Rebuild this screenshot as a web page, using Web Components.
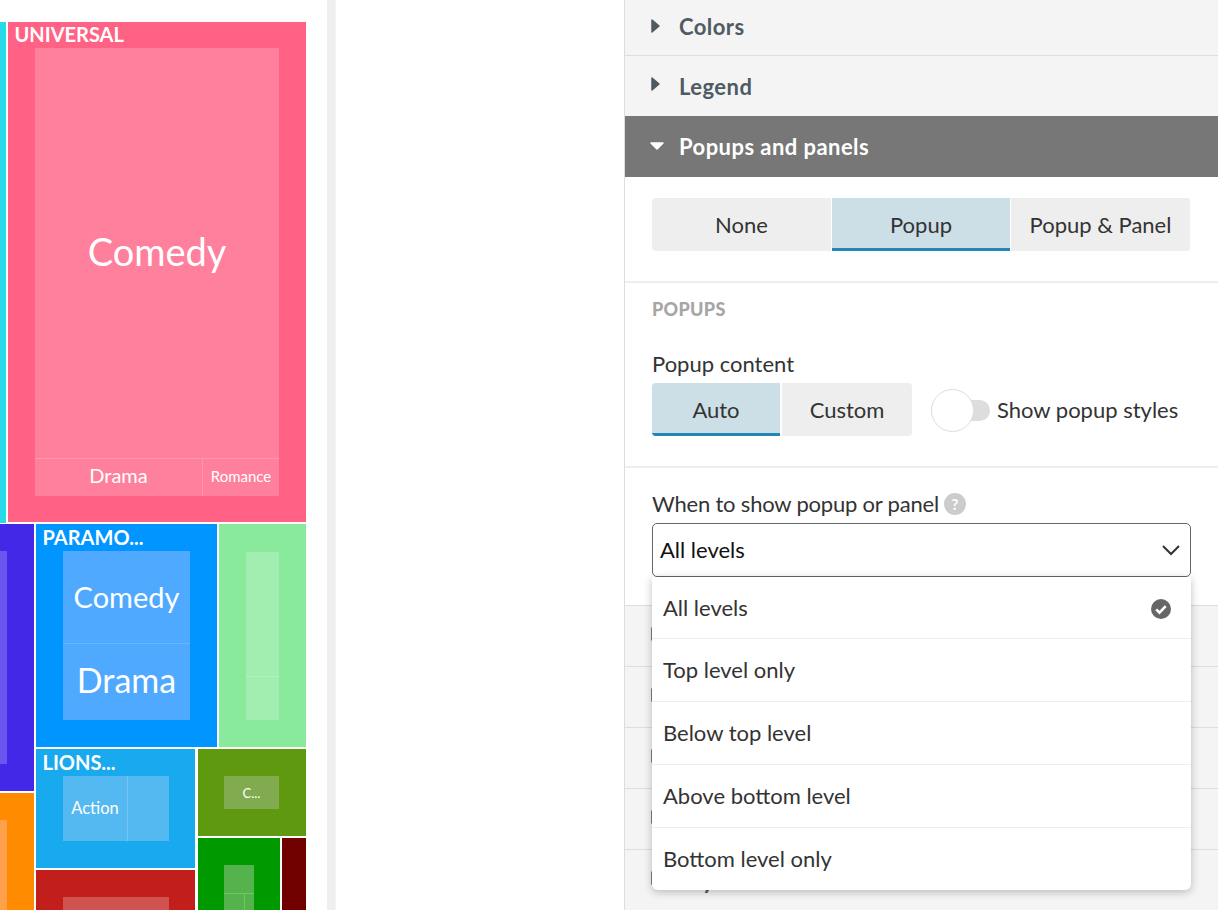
<!DOCTYPE html>
<html>
<head>
<meta charset="utf-8">
<title>Popups and panels</title>
<style>
  html, body { margin: 0; height: 910px; overflow: hidden; background: #fff; }
  body { display: flex; font-family: "Lato", "Liberation Sans", sans-serif; color: #333; }
</style>
</head>
<body>
<preview-pane>
  <tree-tile x="0" y="22" w="6" h="501" color="#29dae8"></tree-tile>
  <tree-tile x="8" y="22" w="298" h="500" color="#ff6285" title-text="UNIVERSAL">
    <tree-tile x="27" y="26" w="244" h="410" color="#ff809d" label="Comedy" size="38" lift="2"></tree-tile>
    <tree-tile x="27" y="436" w="244" h="1" color="#ff97ae"></tree-tile>
    <tree-tile x="27" y="437" w="167" h="37" color="#ff809d" label="Drama" size="20" lift="3"></tree-tile>
    <tree-tile x="194" y="437" w="1" h="37" color="#ff97ae"></tree-tile>
    <tree-tile x="195" y="437" w="76" h="37" color="#ff809d" label="Romance" size="15" lift="2"></tree-tile>
  </tree-tile>
  <tree-tile x="0" y="524" w="34" h="267" color="#4428e8">
    <tree-tile x="-20" y="27" w="27" h="213" color="#6a55ef"></tree-tile>
  </tree-tile>
  <tree-tile x="0" y="793" w="34" h="117" color="#ff8c00">
    <tree-tile x="-20" y="27" w="27" h="90" color="#ffa04d"></tree-tile>
  </tree-tile>
  <tree-tile x="36" y="524" w="181" h="223" color="#0095ff" title-text="PARAMO..." title-top="1">
    <tree-tile x="27" y="27" w="127" h="92" color="#4fa9ff" label="Comedy" size="29" lift="1"></tree-tile>
    <tree-tile x="27" y="119" w="127" h="1" color="#69b5ff"></tree-tile>
    <tree-tile x="27" y="120" w="127" h="76" color="#4fa9ff" label="Drama" size="34" lift="3"></tree-tile>
  </tree-tile>
  <tree-tile x="219" y="524" w="87" h="223" color="#8aea9b">
    <tree-tile x="27" y="28" w="33" h="124" color="#a1eeb0"></tree-tile>
    <tree-tile x="27" y="152" w="33" h="1" color="#b2f1c0"></tree-tile>
    <tree-tile x="27" y="153" w="33" h="43" color="#a1eeb0"></tree-tile>
  </tree-tile>
  <tree-tile x="36" y="749" w="159" h="119" color="#19a9ee" title-text="LIONS..." title-top="1">
    <tree-tile x="27" y="27" w="64" h="65" color="#55b9f1" label="Action" size="16.5" lift="1"></tree-tile>
    <tree-tile x="91" y="27" w="1" h="65" color="#74c6f4"></tree-tile>
    <tree-tile x="92" y="27" w="41" h="65" color="#55b9f1"></tree-tile>
  </tree-tile>
  <tree-tile x="198" y="749" w="108" h="87" color="#5e990f">
    <tree-tile x="26" y="27" w="55" h="33" color="#80ac4f" label="C..." size="13"></tree-tile>
  </tree-tile>
  <tree-tile x="198" y="838" w="82" h="72" color="#009a00">
    <tree-tile x="26" y="27" w="30" h="28" color="#54b34c"></tree-tile>
    <tree-tile x="26" y="55" w="30" h="1" color="#73c26c"></tree-tile>
    <tree-tile x="26" y="56" w="20" h="16" color="#54b34c"></tree-tile>
    <tree-tile x="46" y="56" w="1" h="16" color="#73c26c"></tree-tile>
    <tree-tile x="47" y="56" w="9" h="16" color="#54b34c"></tree-tile>
  </tree-tile>
  <tree-tile x="282" y="838" w="24" h="72" color="#700000"></tree-tile>
  <tree-tile x="36" y="870" w="159" h="40" color="#c21f1c">
    <tree-tile x="27" y="27" w="106" h="13" color="#d15350"></tree-tile>
  </tree-tile>
</preview-pane>

<settings-panel>
  <section-head height="55" divider lift="1">Colors</section-head>
  <section-head height="60">Legend</section-head>
  <section-head height="61" open>Popups and panels</section-head>

  <panel-group pad="21px 27px 30px">
    <seg-buttons options="None|Popup|Popup &amp; Panel" selected="1" cols="179px 178px 179px" gap="1"></seg-buttons>
  </panel-group>

  <panel-group pad="15px 27px 30px">
    <group-title>POPUPS</group-title>
    <div style="display:flex;flex-direction:column;margin-top:30px">
      <field-label>Popup content</field-label>
      <div style="display:flex;align-items:center;margin-top:5px">
        <seg-buttons options="Auto|Custom" selected="0" cols="128px 130px" gap="2"></seg-buttons>
        <toggle-switch>Show popup styles</toggle-switch>
      </div>
    </div>
  </panel-group>

  <panel-group pad="22px 27px 28px" last>
    <field-label help>When to show popup or panel</field-label>
    <drop-select value="All levels" options="All levels|Top level only|Below top level|Above bottom level|Bottom level only"></drop-select>
  </panel-group>

  <section-head height="60" topline></section-head>
  <section-head height="60" topline></section-head>
  <section-head height="60" topline></section-head>
  <section-head height="60" topline></section-head>
  <section-head height="60" topline>Layout</section-head>
</settings-panel>

<script>
class PreviewPane extends HTMLElement {
  constructor() {
    super();
    this.attachShadow({ mode: 'open' });
    this.shadowRoot.innerHTML = `
      <style>
        :host { display: flex; flex: none; width: 336px; height: 910px; }
        .map { position: relative; width: 327px; height: 910px; overflow: hidden; background: #fff; }
        .gutter { width: 8px; background: #efefef; border-right: 1px solid #f4f4f4; }
      </style>
      <div class="map"><slot></slot></div>
      <div class="gutter"></div>`;
  }
}

class TreeTile extends HTMLElement {
  constructor() {
    super();
    const a = n => this.getAttribute(n);
    this.attachShadow({ mode: 'open' });
    const size = a('size') || 16;
    const lift = +(a('lift') || 0);
    this.shadowRoot.innerHTML = `
      <style>
        :host {
          position: absolute; display: block; overflow: hidden;
          left: ${a('x')}px; top: ${a('y')}px; width: ${a('w')}px; height: ${a('h')}px;
          background: ${a('color')}; color: #fff;
          font-family: "Lato", sans-serif;
        }
        .title { position: absolute; left: 6.5px; top: ${a('title-top') || 0}px; font-size: 20px; font-weight: 700; line-height: 24px; white-space: nowrap; }
        .label {
          box-sizing: border-box; height: 100%; padding-bottom: ${lift * 2}px;
          display: flex; align-items: center; justify-content: center;
          font-size: ${size}px; white-space: nowrap;
        }
      </style>
      ${a('title-text') ? `<div class="title">${a('title-text')}</div>` : ''}
      ${a('label') ? `<div class="label">${a('label')}</div>` : ''}
      <slot></slot>`;
  }
}

class SettingsPanel extends HTMLElement {
  constructor() {
    super();
    this.attachShadow({ mode: 'open' });
    this.shadowRoot.innerHTML = `
      <style>
        :host {
          display: block; flex: none; width: 593px; height: 910px; margin-left: 288px;
          border-left: 1px solid #ddd; background: #fff; color: #333;
          font-family: "Lato", sans-serif;
        }
      </style>
      <slot></slot>`;
  }
}

class SectionHead extends HTMLElement {
  constructor() {
    super();
    const open = this.hasAttribute('open');
    this.attachShadow({ mode: 'open' });
    this.shadowRoot.innerHTML = `
      <style>
        :host {
          display: flex; align-items: center; box-sizing: content-box;
          height: ${this.getAttribute('height')}px; padding-left: 54px; position: relative;
          background: ${open ? '#777' : '#f4f4f4'};
          color: ${open ? '#fff' : '#4f5b63'};
          font-size: 22px; font-weight: 700; letter-spacing: .45px;
          ${this.hasAttribute('divider') ? 'border-bottom: 1px solid #ddd;' : ''}
          ${this.hasAttribute('topline') ? 'border-top: 1px solid #ddd;' : ''}
        }
        .txt { margin-bottom: ${(this.getAttribute('lift') || 0) * 2}px; }
        svg { position: absolute; left: ${open ? 25 : 26}px; top: 50%; margin-top: ${open ? -5 : -9}px; }
      </style>
      ${open
        ? '<svg width="14" height="8" viewBox="0 0 14 8"><path d="M1 1h12L7 7z" fill="#fff" stroke="#fff" stroke-width="1.5" stroke-linejoin="round"/></svg>'
        : '<svg width="10" height="14" viewBox="0 0 10 14"><path d="M1 1v12l7-6z" fill="#4f5b63" stroke="#4f5b63" stroke-width="1.5" stroke-linejoin="round"/></svg>'}
      <span class="txt"><slot></slot></span>`;
  }
}

class PanelGroup extends HTMLElement {
  constructor() {
    super();
    this.attachShadow({ mode: 'open' });
    this.shadowRoot.innerHTML = `
      <style>
        :host {
          display: block; padding: ${this.getAttribute('pad')};
          ${this.hasAttribute('last') ? '' : 'border-bottom: 2px solid #eee;'}
        }
      </style>
      <slot></slot>`;
  }
}

class GroupTitle extends HTMLElement {
  constructor() {
    super();
    this.attachShadow({ mode: 'open' });
    this.shadowRoot.innerHTML = `
      <style>:host { display: block; font-size: 18px; line-height: 22px; font-weight: 900; letter-spacing: .3px; color: #a6a6a6; }</style>
      <slot></slot>`;
  }
}

class FieldLabel extends HTMLElement {
  constructor() {
    super();
    const help = this.hasAttribute('help');
    this.attachShadow({ mode: 'open' });
    this.shadowRoot.innerHTML = `
      <style>
        :host {
          display: flex; align-items: center; gap: 5px; font-size: 22px; line-height: 28px; color: #333;
          letter-spacing: ${help ? '-.2px' : '0'};
        }
        .help {
          width: 22px; height: 22px; border-radius: 50%; background: #ccc; color: #fff;
          display: flex; align-items: center; justify-content: center;
          font-size: 15px; font-weight: 700;
        }
      </style>
      <slot></slot>
      ${help ? '<span class="help">?</span>' : ''}`;
  }
}

class SegButtons extends HTMLElement {
  constructor() {
    super();
    this.attachShadow({ mode: 'open' });
    const sel = +this.getAttribute('selected');
    const items = this.getAttribute('options').split('|').map((t, i) =>
      `<div class="btn${i === sel ? ' on' : ''}">${t.replace('&', '&amp;')}</div>`).join('');
    this.shadowRoot.innerHTML = `
      <style>
        :host {
          display: grid; flex: none; height: 53px;
          grid-template-columns: ${this.getAttribute('cols')};
          gap: ${this.getAttribute('gap')}px; border-radius: 4px; overflow: hidden;
        }
        .btn {
          display: flex; align-items: center; justify-content: center;
          background: #eee; color: #333; font-size: 22px; box-sizing: border-box; white-space: nowrap;
        }
        .on { background: #ccdee6; border-bottom: 3px solid #2386b5; padding-top: 3px; }
      </style>
      ${items}`;
  }
}

class ToggleSwitch extends HTMLElement {
  constructor() {
    super();
    this.attachShadow({ mode: 'open' });
    this.shadowRoot.innerHTML = `
      <style>
        :host { display: flex; align-items: center; margin-left: 19px; font-size: 22px; color: #333; white-space: nowrap; }
        .track { position: relative; top: 1px; width: 59px; height: 21px; margin-right: 7px; border-radius: 11px; background: #ddd; }
        .knob {
          position: absolute; left: 0; top: -11px; width: 43px; height: 43px; box-sizing: border-box;
          border-radius: 50%; background: #fff; border: 1px solid #ddd;
        }
      </style>
      <div class="track"><div class="knob"></div></div>
      <slot></slot>`;
  }
}

class DropSelect extends HTMLElement {
  constructor() {
    super();
    this.attachShadow({ mode: 'open' });
    const value = this.getAttribute('value');
    const rows = this.getAttribute('options').split('|').map(t => `
      <div class="row"><span>${t}</span>${t === value ? `
        <svg width="20" height="20" viewBox="0 0 20 20"><circle cx="10" cy="10" r="10" fill="#666"/><path d="M5.2 10.3l3.3 3.3 6.2-6.4" fill="none" stroke="#fff" stroke-width="2.6"/></svg>` : ''}
      </div>`).join('');
    this.shadowRoot.innerHTML = `
      <style>
        :host { display: block; position: relative; margin-top: 5px; }
        .box {
          display: flex; align-items: center; justify-content: space-between; box-sizing: border-box;
          height: 54px; padding: 0 10px 2px 7px; border: 1px solid #666; border-radius: 5px;
          background: #fff; color: #111; font-size: 22px;
        }
        .box svg { position: relative; top: 1px; }
        .menu {
          position: absolute; z-index: 5; left: 0; right: 0; top: 54px; background: #fff;
          border-radius: 0 0 6px 6px; box-shadow: 0 2px 8px rgba(0,0,0,.25);
        }
        .row {
          display: flex; align-items: center; justify-content: space-between; box-sizing: border-box;
          height: 63px; padding: 0 20px 2px 11px; font-size: 22px; color: #333; border-bottom: 1px solid #eee;
        }
        .row:first-child { height: 62px; padding-bottom: 0; }
        .row svg { position: relative; top: 1px; }
        .row:last-child { height: 62px; border-bottom: 0; }
      </style>
      <div class="box"><span>${value}</span>
        <svg width="18" height="11" viewBox="0 0 18 11"><path d="M1 1l8 8 8-8" fill="none" stroke="#333" stroke-width="2"/></svg>
      </div>
      <div class="menu">${rows}</div>`;
  }
}

customElements.define('preview-pane', PreviewPane);
customElements.define('tree-tile', TreeTile);
customElements.define('settings-panel', SettingsPanel);
customElements.define('section-head', SectionHead);
customElements.define('panel-group', PanelGroup);
customElements.define('group-title', GroupTitle);
customElements.define('field-label', FieldLabel);
customElements.define('seg-buttons', SegButtons);
customElements.define('toggle-switch', ToggleSwitch);
customElements.define('drop-select', DropSelect);
</script>
</body>
</html>
